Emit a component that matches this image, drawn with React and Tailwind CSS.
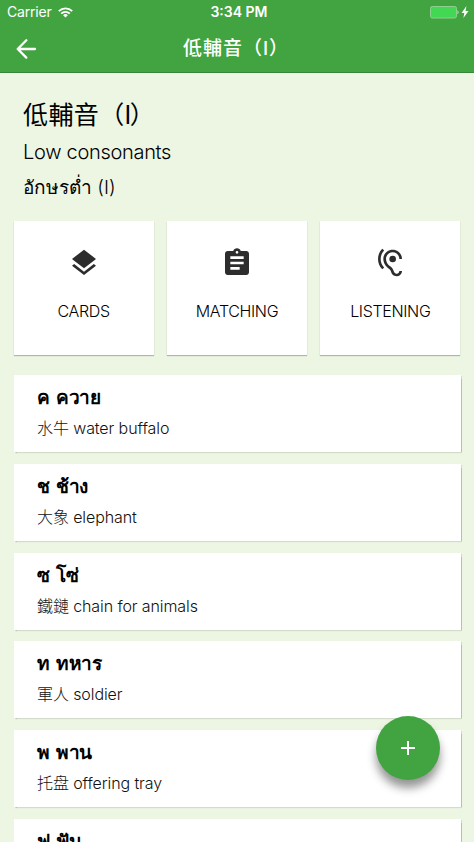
import { MdLayers, MdAssignment, MdHearing } from 'react-icons/md';

const modes = [
    { label: 'CARDS', Icon: MdLayers },
    { label: 'MATCHING', Icon: MdAssignment },
    { label: 'LISTENING', Icon: MdHearing },
];

const words = [
    { thai: 'ค ควาย', meaning: '水牛 water buffalo' },
    { thai: 'ช ช้าง', meaning: '大象 elephant' },
    { thai: 'ซ โซ่', meaning: '鐵鏈 chain for animals' },
    { thai: 'ท ทหาร', meaning: '軍人 soldier' },
    { thai: 'พ พาน', meaning: '托盘 offering tray' },
    { thai: 'ฟ ฟัน', meaning: '' },
];

function StatusBar() {
    return (
        <div className="flex h-6 items-center justify-between pl-[7px] pr-[5px] text-white">
            <div className="flex w-32 items-center gap-[6px]">
                <span className="text-[14px] leading-6 tracking-[-0.2px]">Carrier</span>
                <svg width="15" height="11" viewBox="0 0 15 11" fill="none" stroke="currentColor" strokeWidth="1.8">
                    <path d="M.8 4.1a9.5 9.5 0 0 1 13.4 0M3.2 6.6a6.1 6.1 0 0 1 8.6 0" />
                    <path d="M7.5 10.6 5.1 8.2a3.4 3.4 0 0 1 4.8 0Z" fill="currentColor" stroke="none" />
                </svg>
            </div>
            <span className="pl-[2px] text-[14px] font-semibold leading-6">3:34 PM</span>
            <div className="flex w-32 items-center justify-end">
                <svg width="29" height="13" viewBox="0 0 29 13">
                    <rect x=".5" y=".5" width="26" height="11.5" rx="1.8" fill="#43d854" stroke="#8fce91" />
                    <path d="M27.5 4.3c1.4.6 1.4 3.4 0 4Z" fill="#c5e6c5" />
                </svg>
                <svg className="ml-[2px]" width="8" height="12" viewBox="0 0 8 12" fill="currentColor">
                    <path d="M5.4 0 .6 6.9h2.7L2.4 12 7.5 4.9H4.6Z" />
                </svg>
            </div>
        </div>
    );
}

function Header() {
    return (
        <header className="h-[73px] border-b border-[#37873a] bg-[#42a441]">
            <StatusBar />
            <div className="grid h-12 grid-cols-[60px_1fr_60px] items-center text-white">
                <button className="pl-4" aria-label="Back">
                    <svg width="22" height="22" viewBox="0 0 22 22" fill="none" stroke="currentColor" strokeWidth="2.3" strokeLinecap="round" strokeLinejoin="round">
                        <path d="M19 12H2M10.3 3.3 1.7 12l8.6 8.6" />
                    </svg>
                </button>
                <h1 className="pt-[2px] pr-[2px] text-center text-[19px] font-medium leading-6 tracking-[1px]">低輔音（I）</h1>
            </div>
        </header>
    );
}

function ModeCard({ label, Icon }) {
    return (
        <button className="flex h-[134px] flex-col items-center bg-white pt-[26px] shadow-[0_1px_1px_rgba(0,0,0,0.25)]">
            <Icon className="size-8 text-[#2d2d2d]" />
            <span className="mt-[20px] text-[16px] font-light leading-6 tracking-[-0.35px] text-black">{label}</span>
        </button>
    );
}

function WordCard({ thai, meaning }) {
    return (
        <li className="h-[77px] shrink-0 bg-white pl-[23.5px] pt-[9px] shadow-[0.5px_1px_1px_rgba(0,0,0,0.22)]">
            <div className="h-7 text-[19px] font-semibold leading-7 tracking-[-0.4px] text-black [word-spacing:2px]">{thai}</div>
            <div className="mt-[4px] h-6 text-[16px] font-light leading-6 tracking-[-0.1px] text-[#111]">{meaning}</div>
        </li>
    );
}

export default function App() {
    return (
        <div className="relative h-[842px] w-[474px] overflow-hidden bg-[#edf6e3] font-[Inter,'Noto_Sans_CJK_TC',sans-serif]">
            <Header />
            <main className="pl-[13.5px] pr-[13.5px]">
                <section className="h-[148px] pl-[9.5px] pt-[24px] font-light text-black">
                    <h2 className="h-9 text-[25px] font-normal leading-9 tracking-[0.4px]">
                        低輔音（I<span className="-ml-[2px]">）</span>
                    </h2>
                    <p className="mt-[4px] h-[30px] text-[20px] leading-[30px] tracking-[-0.3px]">Low consonants</p>
                    <p className="mt-[6px] h-[30px] text-[19px] leading-[30px]">อักษรต่ำ (I)</p>
                </section>
                <section className="grid grid-cols-3 gap-[13px]">
                    {modes.map((mode) => (
                        <ModeCard key={mode.label} {...mode} />
                    ))}
                </section>
                <ul className="mt-5 flex flex-col gap-[11.75px]">
                    {words.map((word) => (
                        <WordCard key={word.thai} {...word} />
                    ))}
                </ul>
            </main>
            <button
                aria-label="Add"
                className="absolute left-[375.5px] top-[716px] flex size-16 items-center justify-center rounded-full bg-[#42a441] text-white shadow-[0_8px_10px_rgba(0,0,0,0.42)]"
            >
                <svg width="14" height="14" viewBox="0 0 14 14" stroke="currentColor" strokeWidth="2">
                    <path d="M7 0v14M0 7h14" />
                </svg>
            </button>
        </div>
    );
}
